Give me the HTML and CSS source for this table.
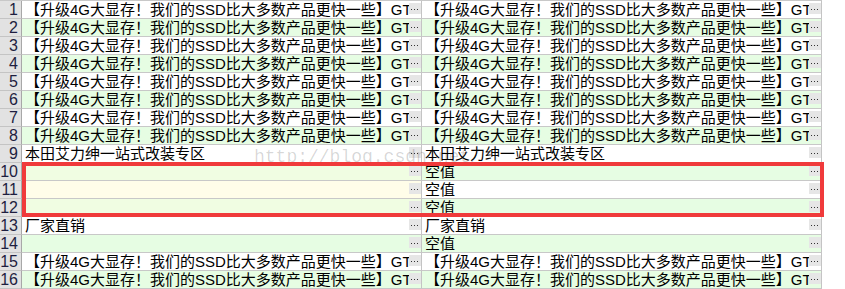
FILE: index.html
```html
<!DOCTYPE html>
<html lang="zh">
<head>
<meta charset="utf-8">
<title>Sheet</title>
<link rel="stylesheet" href="styles.css">
</head>
<body>
<div class="sheet">
  <div class="row"><div class="hdr">1</div><div class="cell"><span class="txt">【升级4G大显存！我们的SSD比大多数产品更快一些】GT 740</span><span class="more"></span></div><div class="cell"><span class="txt">【升级4G大显存！我们的SSD比大多数产品更快一些】GTX 750</span><span class="more"></span></div></div>
  <div class="row alt"><div class="hdr">2</div><div class="cell"><span class="txt">【升级4G大显存！我们的SSD比大多数产品更快一些】GTX 750</span><span class="more"></span></div><div class="cell"><span class="txt">【升级4G大显存！我们的SSD比大多数产品更快一些】GTX 750</span><span class="more"></span></div></div>
  <div class="row"><div class="hdr">3</div><div class="cell"><span class="txt">【升级4G大显存！我们的SSD比大多数产品更快一些】GTX 750</span><span class="more"></span></div><div class="cell"><span class="txt">【升级4G大显存！我们的SSD比大多数产品更快一些】GTX 750</span><span class="more"></span></div></div>
  <div class="row alt"><div class="hdr">4</div><div class="cell"><span class="txt">【升级4G大显存！我们的SSD比大多数产品更快一些】GTX 750</span><span class="more"></span></div><div class="cell"><span class="txt">【升级4G大显存！我们的SSD比大多数产品更快一些】GTX 750</span><span class="more"></span></div></div>
  <div class="row"><div class="hdr">5</div><div class="cell"><span class="txt">【升级4G大显存！我们的SSD比大多数产品更快一些】GTX 750</span><span class="more"></span></div><div class="cell"><span class="txt">【升级4G大显存！我们的SSD比大多数产品更快一些】GTX 750</span><span class="more"></span></div></div>
  <div class="row alt"><div class="hdr">6</div><div class="cell"><span class="txt">【升级4G大显存！我们的SSD比大多数产品更快一些】GTX 750</span><span class="more"></span></div><div class="cell"><span class="txt">【升级4G大显存！我们的SSD比大多数产品更快一些】GTX 750</span><span class="more"></span></div></div>
  <div class="row"><div class="hdr">7</div><div class="cell"><span class="txt">【升级4G大显存！我们的SSD比大多数产品更快一些】GTX 750</span><span class="more"></span></div><div class="cell"><span class="txt">【升级4G大显存！我们的SSD比大多数产品更快一些】GTX 750</span><span class="more"></span></div></div>
  <div class="row alt"><div class="hdr">8</div><div class="cell"><span class="txt">【升级4G大显存！我们的SSD比大多数产品更快一些】GTX 750</span><span class="more"></span></div><div class="cell"><span class="txt">【升级4G大显存！我们的SSD比大多数产品更快一些】GTX 750</span><span class="more"></span></div></div>
  <div class="row"><div class="hdr">9</div><div class="cell"><span class="txt">本田艾力绅一站式改装专区</span><span class="more"></span></div><div class="cell"><span class="txt">本田艾力绅一站式改装专区</span><span class="more"></span></div></div>
  <div class="row alt sel"><div class="hdr">10</div><div class="cell"><span class="txt"></span><span class="more"></span></div><div class="cell"><span class="txt">空值</span><span class="more"></span></div></div>
  <div class="row sel"><div class="hdr">11</div><div class="cell"><span class="txt"></span><span class="more"></span></div><div class="cell"><span class="txt">空值</span><span class="more"></span></div></div>
  <div class="row alt sel"><div class="hdr">12</div><div class="cell"><span class="txt"></span><span class="more"></span></div><div class="cell"><span class="txt">空值</span><span class="more"></span></div></div>
  <div class="row"><div class="hdr">13</div><div class="cell"><span class="txt">厂家直销</span><span class="more"></span></div><div class="cell"><span class="txt">厂家直销</span><span class="more"></span></div></div>
  <div class="row alt"><div class="hdr">14</div><div class="cell"><span class="txt"></span><span class="more"></span></div><div class="cell"><span class="txt">空值</span><span class="more"></span></div></div>
  <div class="row"><div class="hdr">15</div><div class="cell"><span class="txt">【升级4G大显存！我们的SSD比大多数产品更快一些】GTX 750</span><span class="more"></span></div><div class="cell"><span class="txt">【升级4G大显存！我们的SSD比大多数产品更快一些】GTX 750</span><span class="more"></span></div></div>
  <div class="row alt"><div class="hdr">16</div><div class="cell"><span class="txt">【升级4G大显存！我们的SSD比大多数产品更快一些】GTX 750</span><span class="more"></span></div><div class="cell"><span class="txt">【升级4G大显存！我们的SSD比大多数产品更快一些】GTX 750</span><span class="more"></span></div></div>
  <div class="watermark">http://blog.csdn.net/</div>
  <div class="mark"></div>
</div>
</body>
</html>
```
FILE: styles.css
```css
* { box-sizing: border-box; }
html, body { margin: 0; padding: 0; background: #ffffff; }
body { width: 845px; height: 289px; overflow: hidden; }

.sheet {
  position: relative;
  width: 822px;
  border-top: 1px solid #c8c8c8;
  font-family: "Liberation Sans", "Noto Sans CJK SC", sans-serif;
}

.row {
  display: grid;
  grid-template-columns: 22px 400px 400px;
  height: 18px;
  background: #ffffff;
}
.row.alt { background: #e6fde3; }

.hdr {
  background: #e2e2e2;
  border-right: 1px solid #a8a8a8;
  border-bottom: 1px solid #c4c4c4;
  color: #1e1e40;
  font-size: 16px;
  line-height: 17px;
  text-align: right;
  padding-right: 3px;
}

.cell {
  display: flex;
  align-items: flex-start;
  border-right: 1px solid #c4c4c4;
  border-bottom: 1px solid #c8c8c8;
  overflow: hidden;
}

.row.sel .cell:nth-child(2) { background: #f0fde2; }
.row.sel:not(.alt) .cell:nth-child(2) { background: #fffde9; }

.txt {
  flex: 1 1 auto;
  min-width: 0;
  overflow: hidden;
  white-space: nowrap;
  font-size: 15px;
  line-height: 17px;
  color: #000000;
  padding-left: 3px;
  margin-right: 0;
}

.more {
  flex: none;
  width: 12px;
  height: 11px;
  margin-top: 2px;
  background: #e6e6e6;
  position: relative;
}
.more::after {
  content: "";
  position: absolute;
  left: 2px;
  top: 6px;
  width: 1px;
  height: 1px;
  background: #333;
  box-shadow: 3px 0 0 #333, 6px 0 0 #333;
}

.watermark {
  position: absolute;
  left: 254px;
  top: 146px;
  font-family: "Liberation Mono", monospace;
  font-size: 18px;
  line-height: 20px;
  color: rgba(0, 0, 0, 0.16);
  white-space: nowrap;
  pointer-events: none;
}

.mark {
  position: absolute;
  left: 22px;
  top: 161px;
  width: 802px;
  height: 55px;
  border: 4px solid #f03a3b;
  pointer-events: none;
}
```
